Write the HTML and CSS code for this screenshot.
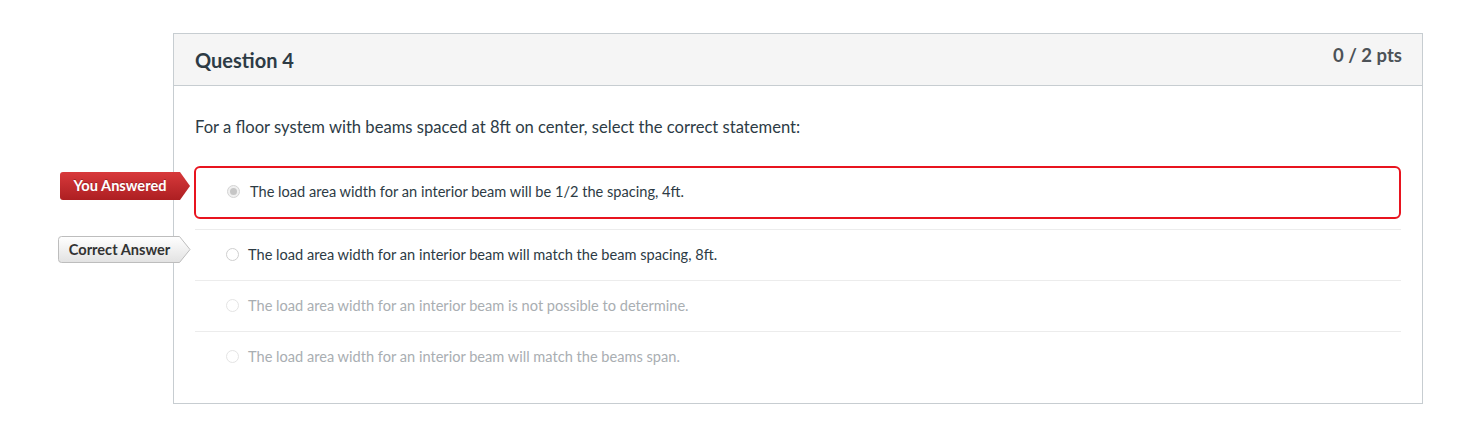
FILE: index.html
```html
<!DOCTYPE html>
<html>
<head>
<meta charset="utf-8">
<link rel="stylesheet" href="styles.css">
</head>
<body>
<div class="card">
  <div class="card-header">
    <span class="q-title">Question 4</span>
    <span class="q-points">0 / 2 pts</span>
  </div>
  <div class="card-body">
    <p class="q-text">For a floor system with beams spaced at 8ft on center, select the correct statement:</p>
    <div class="answers">
      <div class="answer wrong">
        <div class="arrow arrow-wrong">
          <svg class="arrow-shape" width="130" height="28" viewBox="0 0 130 28">
            <defs>
              <linearGradient id="gr" x1="0" y1="0" x2="0" y2="1">
                <stop offset="0" stop-color="#d8393b"/>
                <stop offset="1" stop-color="#ad1f22"/>
              </linearGradient>
            </defs>
            <path d="M3,0 H120 L130,14 L120,28 H3 Q0,28 0,25 V3 Q0,0 3,0 Z" fill="url(#gr)"/>
          </svg>
          <span class="arrow-text">You Answered</span>
        </div>
        <span class="radio checked"></span>
        <span class="a-text">The load area width for an interior beam will be 1/2 the spacing, 4ft.</span>
      </div>
      <div class="answer">
        <div class="arrow arrow-correct">
          <svg class="arrow-shape" width="133" height="27" viewBox="0 0 133 27">
            <defs>
              <linearGradient id="gc" x1="0" y1="0" x2="0" y2="1">
                <stop offset="0" stop-color="#ffffff"/>
                <stop offset="1" stop-color="#e2e2e2"/>
              </linearGradient>
            </defs>
            <path d="M3.5,0.5 H121.5 L132,13.5 L121.5,26.5 H3.5 Q0.5,26.5 0.5,23.5 V3.5 Q0.5,0.5 3.5,0.5 Z" fill="url(#gc)" stroke="#bdbdbd" stroke-width="1"/>
          </svg>
          <span class="arrow-text">Correct Answer</span>
        </div>
        <span class="radio"></span>
        <span class="a-text">The load area width for an interior beam will match the beam spacing, 8ft.</span>
      </div>
      <div class="answer muted">
        <span class="radio"></span>
        <span class="a-text">The load area width for an interior beam is not possible to determine.</span>
      </div>
      <div class="answer muted">
        <span class="radio"></span>
        <span class="a-text">The load area width for an interior beam will match the beams span.</span>
      </div>
    </div>
  </div>
</div>
</body>
</html>
```

FILE: styles.css
```css
html, body {
  margin: 0;
  padding: 0;
  background: #ffffff;
}
body {
  font-family: Lato, "Liberation Sans", sans-serif;
  color: #2d3b45;
  padding: 33px 35px 0 173px;
}
.card {
  width: 1248px;
  border: 1px solid #c7cdd1;
  background: #fff;
}
.card-header {
  height: 51px;
  background: #f5f5f5;
  border-bottom: 1px solid #c7cdd1;
  display: flex;
  justify-content: space-between;
  padding: 0 20px 0 21px;
}
.q-title {
  font-size: 20px;
  font-weight: 700;
  color: #2d3b45;
  line-height: 22px;
  margin-top: 15px;
}
.q-points {
  font-size: 18.5px;
  font-weight: 700;
  color: #4c5257;
  line-height: 22px;
  margin-top: 10px;
}
.card-body {
  padding: 30px 21px 21px 21px;
}
.q-text {
  margin: 0 0 28px 0;
  font-size: 16.6px;
  line-height: 22px;
  color: #2d3b45;
}
.answers {
  display: flex;
  flex-direction: column;
}
.answer {
  position: relative;
  display: flex;
  align-items: center;
  gap: 9px;
  height: 48px;
  padding-bottom: 2px;
  border-top: 1px solid #ececec;
  padding-left: 31px;
  font-size: 14.6px;
  color: #2d3b45;
}
.answer.wrong {
  border: 2px solid #e8141f;
  border-radius: 6px;
  height: 47px;
  margin: 0 0 10px -1px;
  gap: 10px;
}
.answer.muted {
  color: #a9aeb2;
}
.radio {
  width: 11px;
  height: 11px;
  border-radius: 50%;
  border: 1px solid #cfcfcf;
  background: #fff;
  flex: none;
  display: flex;
  align-items: center;
  justify-content: center;
}
.radio.checked {
  background: #f0f0f0;
  border-color: #d4d4d4;
}
.radio.checked::after {
  content: "";
  width: 7px;
  height: 7px;
  border-radius: 50%;
  background: #c6c6c6;
}
.answer.muted .radio {
  border-color: #e4e4e4;
}
.arrow {
  position: absolute;
  display: grid;
}
.arrow-shape,
.arrow-text {
  grid-area: 1 / 1;
}
.arrow-wrong {
  left: -136px;
  top: 4px;
  width: 130px;
  height: 28px;
}
.arrow-correct {
  left: -137px;
  top: 6px;
  width: 133px;
  height: 27px;
}
.arrow-text {
  font-size: 14.6px;
  font-weight: 700;
  align-self: center;
  text-align: center;
  line-height: 16px;
}
.arrow-wrong .arrow-text {
  color: #fff;
  width: 120px;
  text-shadow: 0 -1px 0 rgba(0,0,0,0.25);
}
.arrow-correct .arrow-text {
  color: #333;
  width: 123px;
}
```
